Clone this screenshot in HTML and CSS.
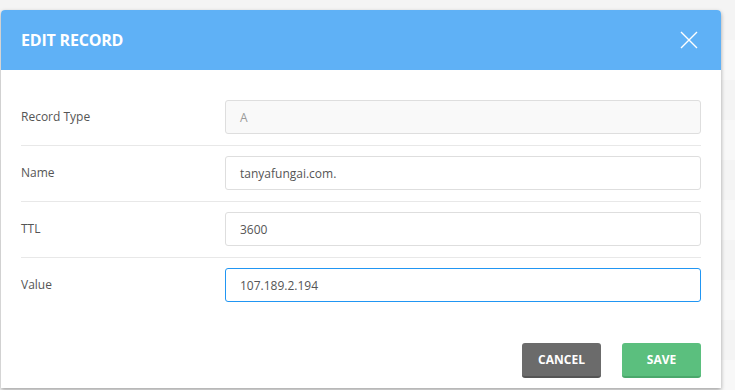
FILE: index.html
```html
<!DOCTYPE html>
<html>
<head>
<meta charset="utf-8">
<link rel="stylesheet" href="styles.css">
</head>
<body>
<div class="page">
  <div class="modal">
    <div class="modal-header">
      <h2 class="title">EDIT RECORD</h2>
      <svg class="close" width="18" height="18" viewBox="0 0 18 18"><path d="M1 1 L17 17 M17 1 L1 17" stroke="#fff" stroke-width="1.4" fill="none"/></svg>
    </div>
    <div class="modal-body">
      <div class="row"><label class="label">Record Type</label><div class="input disabled">A</div></div>
      <div class="row"><label class="label">Name</label><div class="input">tanyafungai.com.</div></div>
      <div class="row"><label class="label">TTL</label><div class="input">3600</div></div>
      <div class="row"><label class="label">Value</label><div class="input focused">107.189.2.194</div></div>
    </div>
    <div class="modal-footer">
      <button class="btn btn-cancel">CANCEL</button>
      <button class="btn btn-save">SAVE</button>
    </div>
  </div>
</div>
</body>
</html>
```
FILE: styles.css
```css
html, body { margin: 0; padding: 0; }
body {
  width: 735px; height: 390px; overflow: hidden;
  background: #f4f4f4;
  font-family: "Open Sans", "Noto Sans", sans-serif;
}
.page {
  padding: 10px 0 0 1px;
  background: repeating-linear-gradient(to bottom, #f4f4f4 0 40px, #f8f8f8 40px 80px);
  height: 390px;
  box-sizing: border-box;
}
.modal {
  width: 720px;
  background: #fff;
  border-radius: 4px 4px 0 0;
  box-shadow: 0 2px 4px rgba(0,0,0,0.35);
}
.modal-header {
  height: 60px;
  background: #5fb1f6;
  border-radius: 4px 4px 0 0;
  display: flex;
  align-items: center;
  justify-content: space-between;
  padding: 0 23px 0 20px;
}
.title {
  margin: 0;
  color: #fff;
  font-size: 16px;
  font-weight: 700;
  letter-spacing: -0.2px;
}
.close { display: block; }
.modal-body { padding: 20px 20px 0 20px; }
.row {
  display: flex;
  align-items: flex-start;
  height: 56px;
  padding-top: 10px;
  border-bottom: 1px solid #e8e8e8;
  box-sizing: border-box;
}
.row:last-child { border-bottom: none; }
.label {
  width: 204px;
  font-size: 12px;
  line-height: 34px;
  color: #555;
}
.input {
  flex: 1;
  height: 34px;
  box-sizing: border-box;
  border: 1px solid #dedede;
  border-radius: 3px;
  padding: 0 14px;
  display: flex;
  align-items: center;
  font-size: 12px;
  color: #555;
}
.input.disabled { background: #f9f9f9; color: #999; }
.input.focused { border-color: #2196f3; }
.modal-footer {
  display: flex;
  justify-content: flex-end;
  gap: 21px;
  padding: 29px 20px 10px 0;
}
.btn {
  width: 79px;
  height: 35px;
  border: none;
  border-radius: 3px;
  color: #fff;
  font-family: "Open Sans", "Noto Sans", sans-serif;
  font-size: 12px;
  font-weight: 700;
  padding: 0;
}
.btn-cancel { background: #6b6b6b; border-bottom: 2px solid #555; }
.btn-save { background: #5bbf7e; border-bottom: 2px solid #4aa86b; }
```
